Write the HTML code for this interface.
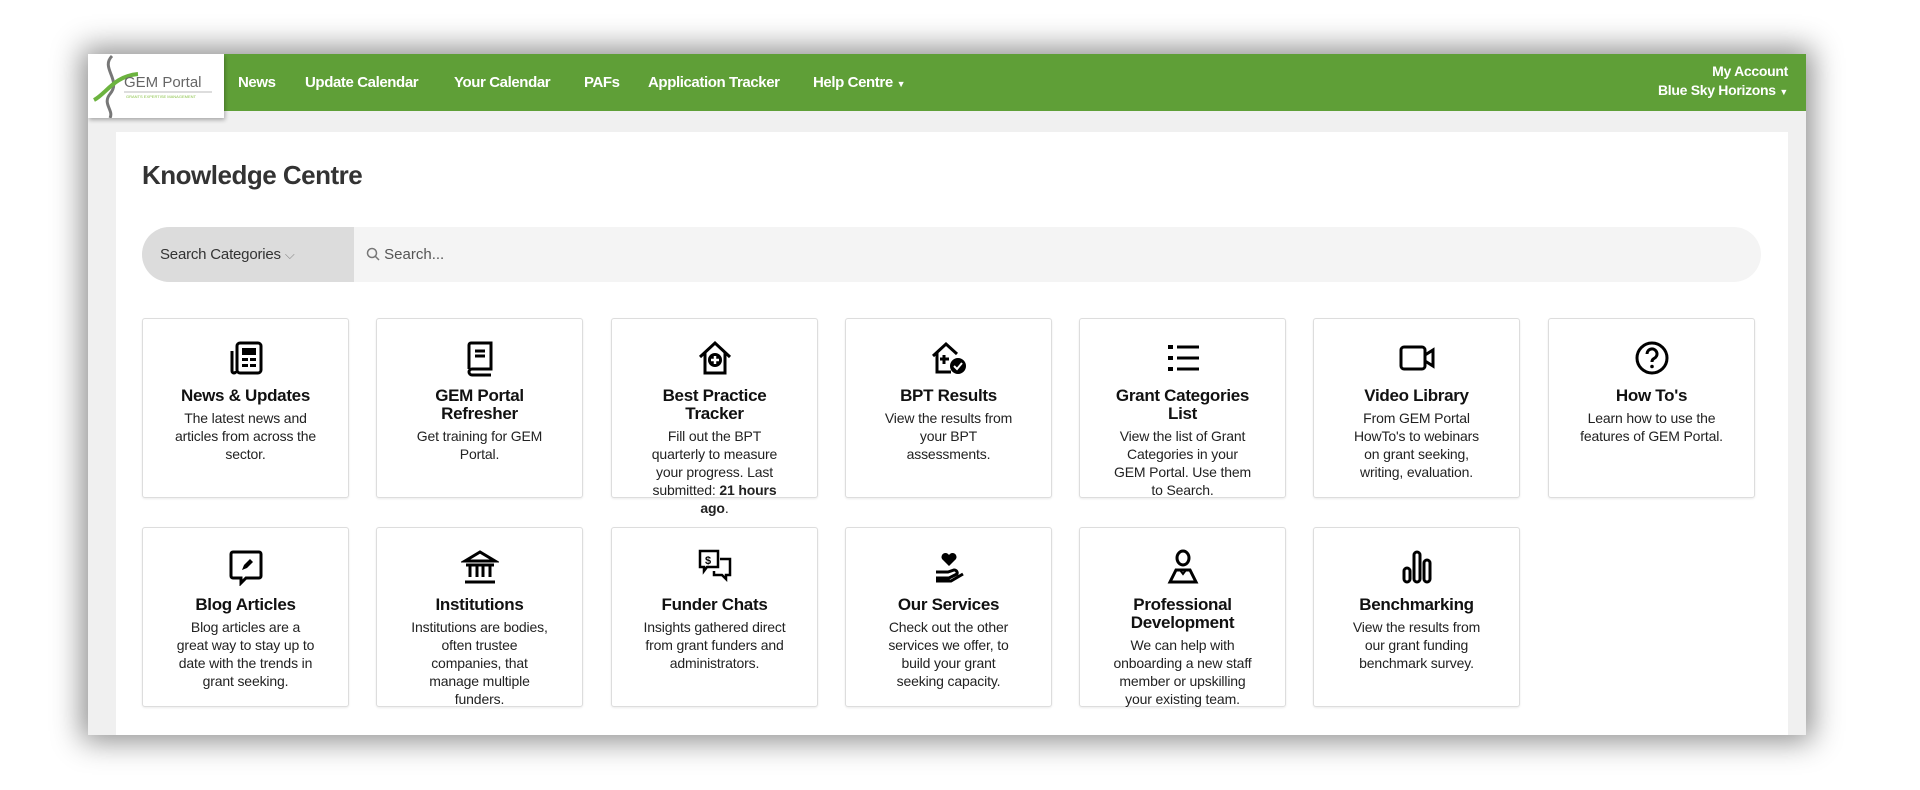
<!DOCTYPE html>
<html><head><meta charset="utf-8"><style>
*{box-sizing:border-box;margin:0;padding:0}
body{width:1920px;height:790px;background:#fff;font-family:"Liberation Sans",Arial,sans-serif;position:relative;overflow:hidden}
.frame{position:absolute;left:88px;top:54px;width:1718px;height:681px;background:#f0f0f0;box-shadow:0 0 28px 6px rgba(0,0,0,.45);overflow:hidden}
.nav{position:absolute;left:0;top:0;width:100%;height:57px;background:#5f9f37;color:#fff}
.logo{position:absolute;left:0;top:0;width:136px;height:64px;background:#fff;box-shadow:1px 2px 4px rgba(0,0,0,.3);z-index:2}
.nav a{position:absolute;top:20px;font-size:15px;font-weight:bold;color:#fff;letter-spacing:-.4px;white-space:nowrap}
.acct{position:absolute;right:18px;text-align:right;font-size:14px;font-weight:bold;line-height:19px;top:8px;letter-spacing:-.3px}
.panel{position:absolute;left:28px;top:78px;width:1672px;height:620px;background:#fff}
h1{position:absolute;left:26px;top:28px;font-size:26px;font-weight:bold;color:#333;letter-spacing:-.5px;font-family:"Liberation Sans",sans-serif}
.search{position:absolute;left:26px;top:95px;width:1619px;height:55px;background:#f4f4f4;border-radius:28px;overflow:hidden}
.cat{position:absolute;left:0;top:0;width:212px;height:55px;background:#dcdcdc;font-size:15px;color:#333;padding:19px 0 0 18px;letter-spacing:-.2px}
.sp{position:absolute;left:224px;top:19px;font-size:15px;color:#555}
.card{position:absolute;width:207px;height:180px;background:#fff;border:1px solid #ddd;border-radius:3px;box-shadow:0 1px 2px rgba(0,0,0,.08);text-align:center;color:#111}
.card svg{display:block;margin:20px auto 0;width:38px;height:38px}
.card h3{font-size:17px;font-weight:bold;line-height:18px;margin:10px auto 0;width:164px;letter-spacing:-.3px}
.card p{font-size:14px;line-height:18px;margin:4px auto 0;width:143px;color:#222;letter-spacing:-.15px}
</style></head><body>
<div class="frame">
 <div class="nav">
  <div class="logo"><svg width="136" height="64" viewBox="0 0 136 64">
   <path d="M24 2 C12 14,34 26,22 40 C14 50,26 56,22 64" fill="none" stroke="#777" stroke-width="3"/>
   <path d="M6 46 C18 40,26 22,50 20" fill="none" stroke="#6cb33f" stroke-width="4"/>
   <text x="36" y="33" font-family="Liberation Sans,sans-serif" font-size="15" fill="#666">GEM Portal</text>
   <line x1="36" y1="38" x2="124" y2="38" stroke="#bbb" stroke-width="1"/>
   <text x="38" y="44" font-family="Liberation Sans,sans-serif" font-size="4" fill="#8bc34a">GRANTS EXPERTISE MANAGEMENT</text>
  </svg></div>
  <a style="left:150px">News</a>
  <a style="left:217px">Update Calendar</a>
  <a style="left:366px">Your Calendar</a>
  <a style="left:496px">PAFs</a>
  <a style="left:560px">Application Tracker</a>
  <a style="left:725px">Help Centre <span style="font-size:9px">▼</span></a>
  <div class="acct">My Account<br>Blue Sky Horizons <span style="font-size:9px">▼</span></div>
 </div>
 <div class="panel">
  <h1>Knowledge Centre</h1>
  <div class="search"><div class="cat">Search Categories <span style="color:#888;font-size:13px">⌵</span></div>
   <div class="sp"><svg width="14" height="14" viewBox="0 0 14 14" style="vertical-align:-2px"><circle cx="6" cy="6" r="4.5" fill="none" stroke="#777" stroke-width="1.5"/><path d="M9.5 9.5L13 13" stroke="#777" stroke-width="1.5"/></svg> Search...</div></div>
 </div>
</div>

<div class="card" style="left:142px;top:318px"><svg viewBox="0 0 38 38"><rect x="10" y="4" width="24" height="30" rx="3" fill="none" stroke="#000" stroke-width="3"/><path d="M5 12v20a2 2 0 0 0 4 0" fill="none" stroke="#000" stroke-width="3"/><rect x="15" y="9" width="14" height="7" fill="#000"/><rect x="15" y="19" width="6" height="3" fill="#000"/><rect x="23" y="19" width="6" height="3" fill="#000"/><rect x="15" y="25" width="6" height="3" fill="#000"/><rect x="23" y="25" width="6" height="3" fill="#000"/></svg><h3>News &amp; Updates</h3><p>The latest news and articles from across the sector.</p></div>
<div class="card" style="left:376px;top:318px"><svg viewBox="0 0 38 38"><path d="M8 30V6a2 2 0 0 1 2-2h20v26H11a3 3 0 0 0 0 6h19" fill="none" stroke="#000" stroke-width="3"/><path d="M14 12h10M14 17h10" stroke="#000" stroke-width="3"/></svg><h3>GEM Portal Refresher</h3><p>Get training for GEM Portal.</p></div>
<div class="card" style="left:611px;top:318px"><svg viewBox="0 0 38 38"><path d="M4 18L19 4l15 14M9 14v20h20V14" fill="none" stroke="#000" stroke-width="3"/><circle cx="19" cy="21" r="7" fill="#000"/><path d="M19 17v8M15 21h8" stroke="#fff" stroke-width="2.5"/></svg><h3>Best Practice Tracker</h3><p>Fill out the BPT quarterly to measure your progress. Last submitted: <b>21 hours ago</b>.</p></div>
<div class="card" style="left:845px;top:318px"><svg viewBox="0 0 38 38"><path d="M3 17L16 5l11 10M7 13v20h14" fill="none" stroke="#000" stroke-width="3"/><path d="M14 16v9M10 20h9" stroke="#000" stroke-width="3"/><circle cx="28" cy="27" r="8" fill="#000"/><path d="M24 27l3 3 5-6" fill="none" stroke="#fff" stroke-width="2"/></svg><h3>BPT Results</h3><p>View the results from your BPT assessments.</p></div>
<div class="card" style="left:1079px;top:318px"><svg viewBox="0 0 38 38"><rect x="4" y="6" width="5" height="4" fill="#000"/><rect x="4" y="17" width="5" height="4" fill="#000"/><rect x="4" y="28" width="5" height="4" fill="#000"/><path d="M13 8h22M13 19h22M13 30h22" stroke="#000" stroke-width="3"/></svg><h3>Grant Categories List</h3><p>View the list of Grant Categories in your GEM Portal. Use them to Search.</p></div>
<div class="card" style="left:1313px;top:318px"><svg viewBox="0 0 38 38"><rect x="3" y="8" width="24" height="22" rx="3" fill="none" stroke="#000" stroke-width="3"/><path d="M27 16l8-5v16l-8-5" fill="none" stroke="#000" stroke-width="3"/></svg><h3>Video Library</h3><p>From GEM Portal HowTo's to webinars on grant seeking, writing, evaluation.</p></div>
<div class="card" style="left:1548px;top:318px"><svg viewBox="0 0 38 38"><circle cx="19" cy="19" r="15" fill="none" stroke="#000" stroke-width="3"/><path d="M14 15a5 5 0 1 1 7 4.5c-1.5.7-2 1.5-2 3.5" fill="none" stroke="#000" stroke-width="3"/><circle cx="19" cy="27.5" r="1.8" fill="#000"/></svg><h3>How To's</h3><p>Learn how to use the features of GEM Portal.</p></div>

<div class="card" style="left:142px;top:527px"><svg viewBox="0 0 38 38"><path d="M6 4h26a2 2 0 0 1 2 2v22a2 2 0 0 1-2 2H19l-5 5v-5H6a2 2 0 0 1-2-2V6a2 2 0 0 1 2-2z" fill="none" stroke="#000" stroke-width="3"/><path d="M15 22l2-5 6-6 3 3-6 6z" fill="#000"/></svg><h3>Blog Articles</h3><p>Blog articles are a great way to stay up to date with the trends in grant seeking.</p></div>
<div class="card" style="left:376px;top:527px"><svg viewBox="0 0 38 38"><path d="M4 13L19 4l15 9z" fill="none" stroke="#000" stroke-width="3"/><path d="M9 17v12M16 17v12M22 17v12M29 17v12M5 17h28M4 34h30" stroke="#000" stroke-width="3"/></svg><h3>Institutions</h3><p>Institutions are bodies, often trustee companies, that manage multiple funders.</p></div>
<div class="card" style="left:611px;top:527px"><svg viewBox="0 0 38 38"><path d="M4 3h18v16H11l-3 4v-4H4z" fill="none" stroke="#000" stroke-width="2.5"/><path d="M24 11h10v16h-4v4l-4-4h-8v-4" fill="none" stroke="#000" stroke-width="2.5"/><text x="9" y="16" font-size="11" font-weight="bold" font-family="Liberation Sans,sans-serif">$</text></svg><h3>Funder Chats</h3><p>Insights gathered direct from grant funders and administrators.</p></div>
<div class="card" style="left:845px;top:527px"><svg viewBox="0 0 38 38"><path d="M19 18l-7-7a4 4 0 0 1 7-4 4 4 0 0 1 7 4z" fill="#000"/><path d="M6 24h12l6-2a3 3 0 0 1 3 4l-8 4H6M6 33h15l12-7" fill="none" stroke="#000" stroke-width="3"/></svg><h3>Our Services</h3><p>Check out the other services we offer, to build your grant seeking capacity.</p></div>
<div class="card" style="left:1079px;top:527px"><svg viewBox="0 0 38 38"><ellipse cx="19" cy="10" rx="6" ry="7" fill="none" stroke="#000" stroke-width="3"/><path d="M6 34l6-12h14l6 12z" fill="none" stroke="#000" stroke-width="3"/><path d="M16 22l3 4 3-4" fill="none" stroke="#000" stroke-width="2"/></svg><h3>Professional Development</h3><p>We can help with onboarding a new staff member or upskilling your existing team.</p></div>
<div class="card" style="left:1313px;top:527px"><svg viewBox="0 0 38 38"><rect x="6" y="20" width="6" height="14" rx="3" fill="none" stroke="#000" stroke-width="3"/><rect x="16" y="4" width="6" height="30" rx="3" fill="none" stroke="#000" stroke-width="3"/><rect x="26" y="12" width="6" height="22" rx="3" fill="none" stroke="#000" stroke-width="3"/></svg><h3>Benchmarking</h3><p>View the results from our grant funding benchmark survey.</p></div>
</body></html>
